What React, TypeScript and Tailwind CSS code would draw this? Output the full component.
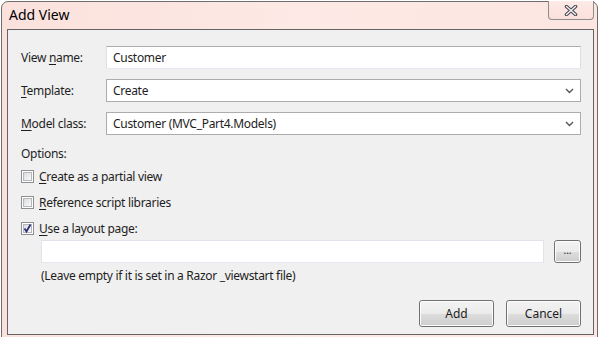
import React from "react";

const font = { fontFamily: '"Noto Sans", "Open Sans", Arial, sans-serif' };

function Chevron() {
  return (
    <svg width="9" height="6" viewBox="0 0 9 6" className="absolute right-[6px] top-[8px]">
      <path d="M1 1 L4.5 4.5 L8 1" fill="none" stroke="#555" strokeWidth="1.4" />
    </svg>
  );
}

function Select({ value }: { value: string }) {
  return (
    <div className="relative flex-1 h-[23px] border border-[#acacac] bg-white flex items-center pl-[6px] text-[12px] tracking-[-0.3px] text-[#1e1e1e]">
      {value}
      <Chevron />
    </div>
  );
}

function Label({ pre, u, post }: { pre?: string; u: string; post: string }) {
  return (
    <div className="w-[85px] text-[12px] tracking-[-0.3px] text-[#1e1e1e] leading-[16px]">
      {pre}
      <span className="underline underline-offset-2">{u}</span>
      {post}
    </div>
  );
}

function Checkbox({ checked }: { checked?: boolean }) {
  return (
    <div className="relative w-[13px] h-[13px] border border-[#8e8f8f] bg-white p-[1px] shrink-0">
      <div className="w-full h-full border border-[#b4b8be] bg-gradient-to-br from-[#dcdcdc] to-[#fafafa]" />
      {checked && (
        <svg width="11" height="11" viewBox="0 0 11 11" className="absolute left-[0px] top-[0px]">
          <path d="M2.5 5.5 L4.5 8.5 L8.5 1.5" fill="none" stroke="#2d3280" strokeWidth="1.8" />
        </svg>
      )}
    </div>
  );
}

function CheckRow({ u, post, checked }: { u: string; post: string; checked?: boolean }) {
  return (
    <div className="flex items-center h-[13px] gap-[5px]">
      <Checkbox checked={checked} />
      <span className="text-[12px] tracking-[-0.3px] text-[#1e1e1e] leading-[16px]">
        <span className="underline underline-offset-2">{u}</span>
        {post}
      </span>
    </div>
  );
}

function Button({ children, className }: { children?: React.ReactNode; className?: string }) {
  return (
    <div
      className={
        "relative border border-[#707070] rounded-[3px] flex items-center justify-center text-[12px] text-[#1e1e1e] overflow-hidden " +
        (className ?? "")
      }
    >
      <div className="absolute inset-0 flex flex-col border border-[#fcfcfc] rounded-[2px]">
        <div className="flex-1 bg-gradient-to-b from-[#f2f2f2] to-[#ebebeb]" />
        <div className="flex-1 bg-gradient-to-b from-[#dddddd] to-[#cfcfcf]" />
      </div>
      <span className="relative">{children}</span>
    </div>
  );
}

export default function App() {
  return (
    <div className="w-[600px] h-[337px] bg-white overflow-hidden" style={font}>
      <div className="ml-[1px] mt-[1px] w-[597px] h-[345px] border border-[#6d6d6d] rounded-t-[7px] bg-gradient-to-r from-[#fbe1dc] via-[#fde9e5] to-[#fde6e1] flex flex-col">
        <div className="h-[27px] flex items-start relative">
          <div className="ml-[7px] mt-[4px] text-[14px] text-black leading-[18px]">Add View</div>
          <div className="absolute right-[3px] top-[-1px] w-[46px] h-[19px] border border-t-0 border-[#8d8d8d] rounded-b-[4px] bg-gradient-to-b from-[#fdeae6] to-[#fbe0db] flex items-center justify-center">
            <svg width="14" height="11" viewBox="0 0 14 11">
              <path d="M2.5 1.5 L11.5 9.5 M11.5 1.5 L2.5 9.5" stroke="#4a4a52" strokeWidth="3.6" strokeLinecap="round" />
              <path d="M2.5 1.5 L11.5 9.5 M11.5 1.5 L2.5 9.5" stroke="#f4f4f6" strokeWidth="1.4" strokeLinecap="round" />
            </svg>
          </div>
        </div>
        <div className="ml-[5px] w-[587px] h-[306px] border border-[#646464] bg-[#f0f0f0] pt-[16px] pl-[13px] pr-[12px] flex flex-col">
          <div className="flex items-center">
            <Label pre="View " u="n" post="ame:" />
            <div className="flex-1 h-[23px] border border-t-[#abadb3] border-l-[#dbdfe6] border-r-[#dbdfe6] border-b-[#e3e9ef] bg-white flex items-center pl-[6px] text-[12px] tracking-[-0.3px] text-[#1e1e1e]">
              Customer
            </div>
          </div>
          <div className="flex items-center mt-[10px]">
            <Label u="T" post="emplate:" />
            <Select value="Create" />
          </div>
          <div className="flex items-center mt-[10px]">
            <Label u="M" post="odel class:" />
            <Select value="Customer (MVC_Part4.Models)" />
          </div>
          <div className="mt-[11px] text-[12px] tracking-[-0.3px] leading-[16px] text-[#1e1e1e]">Options:</div>
          <div className="mt-[8px] flex flex-col gap-[13px]">
            <CheckRow u="C" post="reate as a partial view" />
            <CheckRow u="R" post="eference script libraries" />
            <CheckRow u="U" post="se a layout page:" checked />
          </div>
          <div className="mt-[5px] ml-[20px] flex items-center gap-[10px]">
            <div className="flex-1 h-[23px] border border-t-[#e2e3ea] border-l-[#e2e3ea] border-r-[#e2e3ea] border-b-[#e3e9ef] bg-white" />
            <Button className="w-[27px] h-[23px]">
              <span className="text-[10px] leading-none relative top-[-2px]">...</span>
            </Button>
          </div>
          <div className="mt-[5px] ml-[20px] text-[12px] tracking-[-0.3px] leading-[16px] text-[#1e1e1e]">
            (Leave empty if it is set in a Razor _viewstart file)
          </div>
          <div className="mt-[16px] flex justify-end gap-[12px]">
            <Button className="w-[75px] h-[27px]">Add</Button>
            <Button className="w-[75px] h-[27px]">Cancel</Button>
          </div>
        </div>
      </div>
    </div>
  );
}
